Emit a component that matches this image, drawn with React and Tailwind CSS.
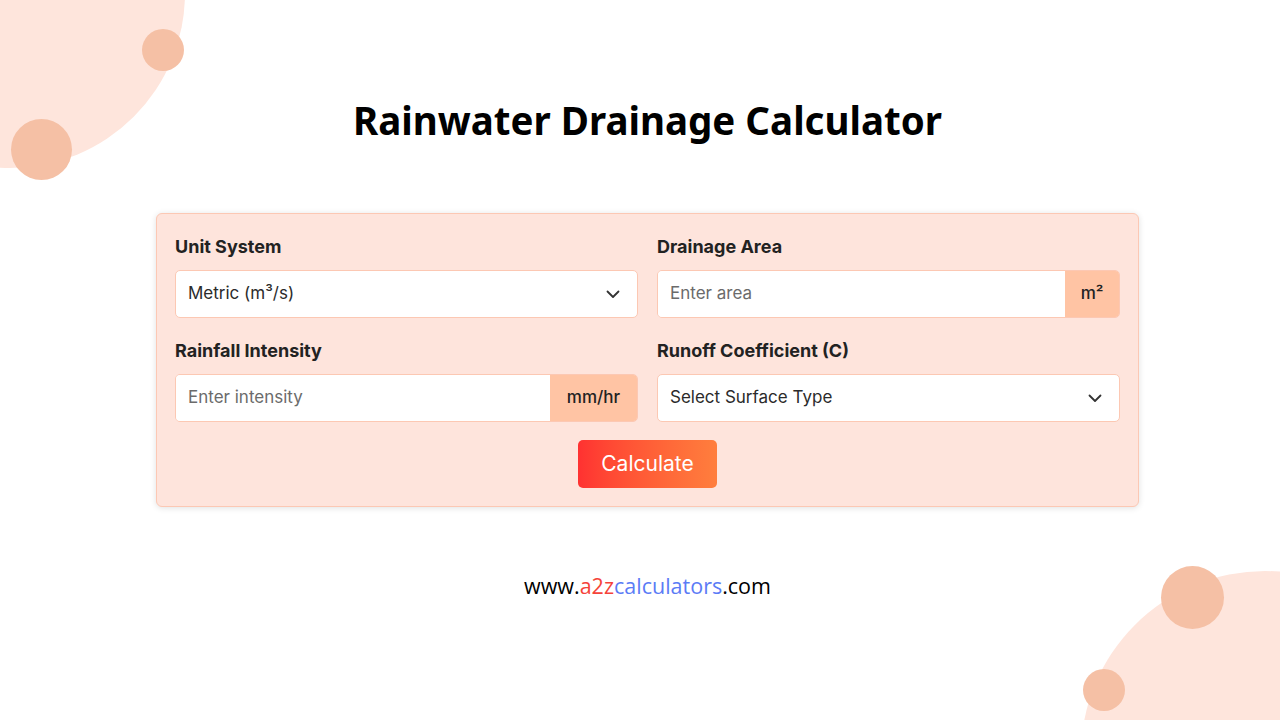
import React from "react";

function Chevron() {
  return (
    <svg width="24" height="24" viewBox="0 0 24 24" fill="none" stroke="#333" strokeWidth="1.8" strokeLinecap="round" strokeLinejoin="round">
      <path d="M6.5 9.5l5.5 5.5 5.5-5.5" />
    </svg>
  );
}

function Field({ label, children }) {
  return (
    <div className="flex flex-col">
      <label className="text-[18px] leading-[24px] font-bold text-[#222] mb-[11px]">{label}</label>
      {children}
    </div>
  );
}

function SelectBox({ value }) {
  return (
    <div className="flex items-center justify-between h-[48px] bg-white border border-[#fcc8b3] rounded-[5px] pl-[12px] pr-[12px]">
      <span className="text-[17px] text-[#2b2b2b]">{value}</span>
      <Chevron />
    </div>
  );
}

function UnitInput({ placeholder, unit, unitWidth }) {
  return (
    <div className="flex h-[48px] border border-[#fcc8b3] rounded-[5px] overflow-hidden">
      <input
        placeholder={placeholder}
        className="flex-1 min-w-0 bg-white pl-[12px] text-[17px] text-[#2b2b2b] placeholder:text-[#6b6b6b] outline-none"
      />
      <span className={"flex items-center justify-center bg-[#ffc4a4] text-[17px] font-medium text-[#222] " + unitWidth}>
        {unit}
      </span>
    </div>
  );
}

export default function App() {
  return (
    <div className="relative w-full h-[720px] overflow-hidden bg-white" style={{ fontFamily: "Inter, 'Noto Sans', sans-serif" }}>
      {/* decorative blobs */}
      <div className="absolute left-[-165px] top-[-182px] w-[350px] h-[350px] rounded-full bg-[#fee5dc]" />
      <div className="absolute left-[142px] top-[29px] w-[42px] h-[42px] rounded-full bg-[#f5c0a5]" />
      <div className="absolute left-[11px] top-[119px] w-[61px] h-[61px] rounded-full bg-[#f5c0a5]" />
      <div className="absolute left-[1081px] top-[571px] w-[368px] h-[368px] rounded-full bg-[#fee5dc]" />
      <div className="absolute left-[1161px] top-[566px] w-[63px] h-[63px] rounded-full bg-[#f5c0a5]" />
      <div className="absolute left-[1083px] top-[669px] w-[42px] h-[42px] rounded-full bg-[#f5c0a5]" />

      <div className="relative flex flex-col items-center pt-[96px] pl-[15px]">
        <h1
          className="text-[38.5px] leading-[48px] font-bold text-black"
          style={{ fontFamily: "'Noto Sans', sans-serif" }}
        >
          Rainwater Drainage Calculator
        </h1>

        <div className="mt-[69px] w-[983px] bg-[#fee4dc] border border-[#fcc8b4] rounded-[6px] shadow-[0_1px_6px_rgba(0,0,0,0.12)] px-[18px] pt-[21px] pb-[18px]">
          <div className="grid grid-cols-2 gap-x-[19px] gap-y-[21px]">
            <Field label="Unit System">
              <SelectBox value="Metric (m³/s)" />
            </Field>
            <Field label="Drainage Area">
              <UnitInput placeholder="Enter area" unit="m²" unitWidth="w-[54px]" />
            </Field>
            <Field label="Rainfall Intensity">
              <UnitInput placeholder="Enter intensity" unit="mm/hr" unitWidth="w-[87px]" />
            </Field>
            <Field label="Runoff Coefficient (C)">
              <SelectBox value="Select Surface Type" />
            </Field>
          </div>
          <div className="flex justify-center mt-[18px]">
            <button className="w-[139px] h-[48px] rounded-[5px] bg-gradient-to-r from-[#ff3131] to-[#ff7e3d] text-white text-[21px]">
              Calculate
            </button>
          </div>
        </div>

        <p className="mt-[65px] text-[21.5px] leading-[28px] text-black" style={{ fontFamily: "'Open Sans', sans-serif" }}>
          www.<span className="text-[#f5433a]">a2z</span>
          <span className="text-[#5b7bf6]">calculators</span>.com
        </p>
      </div>
    </div>
  );
}
